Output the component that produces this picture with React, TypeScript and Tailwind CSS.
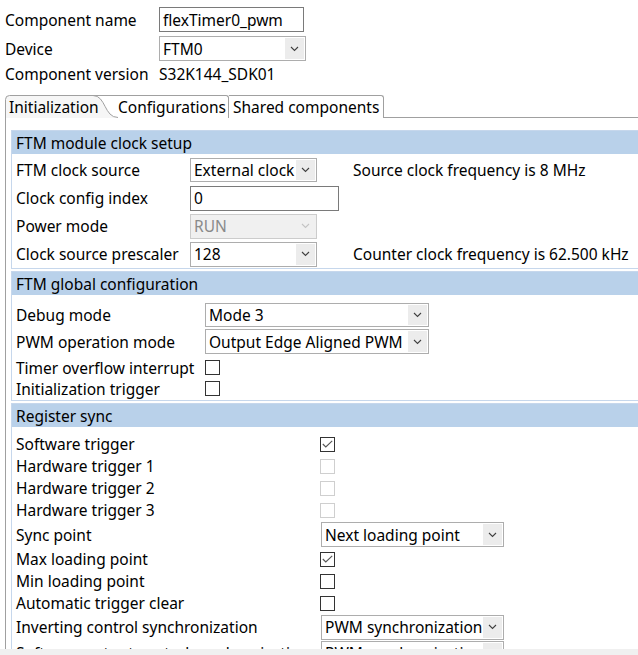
import React from "react";

const Chevron = ({ color = "#404040" }: { color?: string }) => (
  <svg width="9" height="6" viewBox="0 0 9 6" fill="none">
    <path d="M1 1L4.5 4.5L8 1" stroke={color} strokeWidth="1.1" />
  </svg>
);

function Select({
  value,
  className,
  disabled,
}: {
  value: string;
  className: string;
  disabled?: boolean;
}) {
  return (
    <div
      className={`flex border ${
        disabled
          ? "border-[#cccccc] bg-[#f0f0f0] text-[#8a8a8a]"
          : "border-[#adadad] bg-white text-black"
      } ${className}`}
    >
      <div className="flex-1 min-w-0 pl-[3px] flex items-center whitespace-nowrap overflow-hidden">
        {value}
      </div>
      <div
        className={`w-[19px] my-px mr-px flex items-center justify-center ${
          disabled ? "" : "bg-[#ececec]"
        }`}
      >
        <Chevron color={disabled ? "#c4c4c4" : "#404040"} />
      </div>
    </div>
  );
}

function Check({ checked, disabled }: { checked?: boolean; disabled?: boolean }) {
  return (
    <div
      className={`w-[15px] h-[15px] border bg-white flex items-center justify-center ${
        disabled ? "border-[#cfcfcf]" : "border-[#333333]"
      }`}
    >
      {checked && (
        <svg width="11" height="9" viewBox="0 0 11 9" fill="none">
          <path d="M0.8 4L3.8 7L10.2 0.8" stroke="#555555" strokeWidth="1.1" />
        </svg>
      )}
    </div>
  );
}

function Section({ title, children, className }: { title: string; children: React.ReactNode; className: string }) {
  return (
    <div className={`w-[660px] border border-[#c6d7ec] ${className}`}>
      <div className="h-[23px] bg-[#b9d1ea] pl-[4px] flex items-center whitespace-nowrap">{title}</div>
      {children}
    </div>
  );
}

export default function App() {
  return (
    <div className="w-[638px] h-[655px] bg-white flex flex-col overflow-hidden font-['Noto_Sans',sans-serif] text-[15.5px] leading-[22px] text-black">
      <div className="flex-1 min-h-0 overflow-hidden">
        {/* Header form */}
        <div className="pl-[5px] pt-[7px]">
          <div className="flex items-center h-[25px]">
            <span className="w-[154px] whitespace-nowrap">Component name</span>
            <div className="w-[145px] h-[25px] border border-[#7a7a7a] pl-[3px] flex items-center">flexTimer0_pwm</div>
          </div>
          <div className="flex items-center h-[25px] mt-[4px]">
            <span className="w-[154px]">Device</span>
            <Select value="FTM0" className="w-[147px] h-[25px]" />
          </div>
          <div className="flex items-center h-[22px] mt-[2px]">
            <span className="w-[154px] whitespace-nowrap">Component version</span>
            <span>S32K144_SDK01</span>
          </div>
        </div>

        {/* Tabs */}
        <div className="flex h-[23px] mt-[10px] pl-[5px]">
          <div className="relative w-[113px] h-[23px] shrink-0">
            <svg className="absolute left-0 top-0" width="113" height="23" viewBox="0 0 113 23" fill="none">
              <path
                d="M0.5 23V4.5Q0.5 0.5 4.5 0.5H88C101 0.5 99 22.5 113 22.5L113 23H0.5Z"
                fill="#f6f6f6"
              />
              <path
                d="M0.5 23V4.5Q0.5 0.5 4.5 0.5H88C101 0.5 99 22.5 113 22.5"
                stroke="#a0a0a0"
              />
              <path d="M88 0.5H113" stroke="#a0a0a0" />
            </svg>
            <span className="relative pl-[4px] leading-[24px]">Initialization</span>
          </div>
          <div className="w-[111px] h-[23px] shrink-0 border-t border-r border-[#a0a0a0] rounded-tr-[3px] whitespace-nowrap leading-[22px]">
            Configurations
          </div>
          <div className="w-[155px] h-[23px] shrink-0 border-t border-r border-[#a0a0a0] rounded-tr-[3px] pl-[4px] whitespace-nowrap leading-[22px]">
            Shared components
          </div>
          <div className="flex-1 h-[23px] border-b border-[#a0a0a0]" />
        </div>

        {/* Panel */}
        <div className="ml-[5px] border-l border-[#a0a0a0] h-full pl-[5px] pt-[12px]">
          <Section title="FTM module clock setup" className="">
            <div className="pt-[2px]">
              <div className="flex items-center h-[28px]">
                <span className="w-[178px] pl-[4px] whitespace-nowrap">FTM clock source</span>
                <div className="w-[163px]">
                  <Select value="External clock" className="w-[127px] h-[24px]" />
                </div>
                <span className="whitespace-nowrap">Source clock frequency is 8 MHz</span>
              </div>
              <div className="flex items-center h-[28px]">
                <span className="w-[178px] pl-[4px] whitespace-nowrap">Clock config index</span>
                <div className="w-[149px] h-[25px] border border-[#7a7a7a] pl-[3px] flex items-center">0</div>
              </div>
              <div className="flex items-center h-[28px]">
                <span className="w-[178px] pl-[4px] whitespace-nowrap">Power mode</span>
                <Select value="RUN" className="w-[127px] h-[25px]" disabled />
              </div>
              <div className="flex items-center h-[28px]">
                <span className="w-[178px] pl-[4px] whitespace-nowrap">Clock source prescaler</span>
                <div className="w-[163px]">
                  <Select value="128" className="w-[127px] h-[25px]" />
                </div>
                <span className="whitespace-nowrap">Counter clock frequency is 62.500 kHz</span>
              </div>
            </div>
          </Section>

          <Section title="FTM global configuration" className="mt-[2px]">
            <div className="pt-[6px] pb-[1px]">
              <div className="flex items-center h-[27px]">
                <span className="w-[193px] pl-[4px] whitespace-nowrap">Debug mode</span>
                <Select value="Mode 3" className="w-[224px] h-[24px]" />
              </div>
              <div className="flex items-center h-[27px]">
                <span className="w-[193px] pl-[4px] whitespace-nowrap">PWM operation mode</span>
                <Select value="Output Edge Aligned PWM" className="w-[224px] h-[25px]" />
              </div>
              <div className="flex items-center h-[21px] mt-[2px]">
                <span className="w-[193px] pl-[4px] whitespace-nowrap">Timer overflow interrupt</span>
                <Check />
              </div>
              <div className="flex items-center h-[21px]">
                <span className="w-[193px] pl-[4px] whitespace-nowrap">Initialization trigger</span>
                <Check />
              </div>
            </div>
          </Section>

          <Section title="Register sync" className="mt-[2px]">
            <div className="pt-[6px]">
              <div className="flex items-center h-[22px]">
                <span className="w-[308px] pl-[4px] whitespace-nowrap">Software trigger</span>
                <Check checked />
              </div>
              <div className="flex items-center h-[22px]">
                <span className="w-[308px] pl-[4px] whitespace-nowrap">Hardware trigger 1</span>
                <Check disabled />
              </div>
              <div className="flex items-center h-[22px]">
                <span className="w-[308px] pl-[4px] whitespace-nowrap">Hardware trigger 2</span>
                <Check disabled />
              </div>
              <div className="flex items-center h-[22px]">
                <span className="w-[308px] pl-[4px] whitespace-nowrap">Hardware trigger 3</span>
                <Check disabled />
              </div>
              <div className="flex items-center h-[27px]">
                <span className="w-[309px] pl-[4px] whitespace-nowrap">Sync point</span>
                <Select value="Next loading point" className="w-[183px] h-[25px]" />
              </div>
              <div className="flex items-center h-[22px]">
                <span className="w-[308px] pl-[4px] whitespace-nowrap">Max loading point</span>
                <Check checked />
              </div>
              <div className="flex items-center h-[22px]">
                <span className="w-[308px] pl-[4px] whitespace-nowrap">Min loading point</span>
                <Check />
              </div>
              <div className="flex items-center h-[22px]">
                <span className="w-[308px] pl-[4px] whitespace-nowrap">Automatic trigger clear</span>
                <Check />
              </div>
              <div className="flex items-center h-[26px]">
                <span className="w-[309px] pl-[4px] whitespace-nowrap">Inverting control synchronization</span>
                <Select value="PWM synchronization" className="w-[183px] h-[25px]" />
              </div>
              <div className="flex items-center h-[26px]">
                <span className="w-[309px] pl-[4px] whitespace-nowrap">Software output control synchronization</span>
                <Select value="PWM synchronization" className="w-[183px] h-[25px]" />
              </div>
            </div>
          </Section>
        </div>
      </div>
      <div className="h-[6px] shrink-0 bg-[#f0f0f0]" />
    </div>
  );
}
